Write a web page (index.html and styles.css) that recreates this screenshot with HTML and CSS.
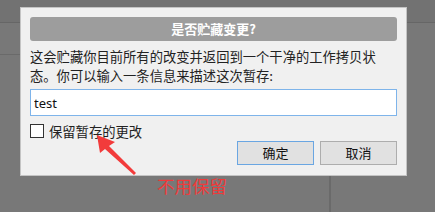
FILE: index.html
```html
<!DOCTYPE html>
<html lang="zh-CN">
<head>
    <meta charset="UTF-8">
    <title>是否贮藏变更?</title>
    <link rel="stylesheet" href="styles.css">
</head>
<body>

    <div class="desktop">
        <div class="bg-band"></div>
        <div class="bg-line-left"></div>
        <div class="bg-divider"></div>

        <div class="dialog">
            <div class="dialog-title">是否贮藏变更?</div>
            <p class="dialog-text">这会贮藏你目前所有的改变并返回到一个干净的工作拷贝状态。你可以输入一条信息来描述这次暂存:</p>
            <input class="dialog-input" type="text" value="test">
            <label class="keep-row">
                <span class="checkbox"></span>
                <span>保留暂存的更改</span>
            </label>
            <div class="buttons">
                <div class="button primary">确定</div>
                <div class="button">取消</div>
            </div>
        </div>

        <svg class="arrow" width="435" height="212" viewBox="0 0 435 212">
            <polygon points="97,135 115,142 109,146 136,173 134,175 105,149 100,153" fill="#f23b3b"/>
        </svg>
        <div class="note">不用保留</div>
    </div>

</body>
</html>
```

FILE: styles.css
```css
body {
    margin: 0;
    background-color: #787878;
    font-family: "Noto Sans CJK SC", "Noto Sans", sans-serif;
}

.desktop {
    position: relative;
    width: 435px;
    height: 212px;
    overflow: hidden;
}

/* windows behind the dialog */
.bg-band {
    position: absolute;
    left: 0;
    top: 0;
    width: 435px;
    height: 22px;
    background-color: #727272;
    border-bottom: 1px solid #666;
}

.bg-line-left {
    position: absolute;
    left: 0;
    top: 54px;
    width: 20px;
    height: 1px;
    background-color: #6a6a6a;
}

.bg-divider {
    position: absolute;
    left: 329px;
    top: 176px;
    width: 2px;
    height: 36px;
    background-color: #6a6a6a;
}

.dialog {
    position: absolute;
    left: 20px;
    top: 7px;
    width: 387px;
    height: 169px;
    box-sizing: border-box;
    padding: 9px;
    background-color: #f0f0f0;
    border: 1px solid #c4c4c4;
    display: flex;
    flex-direction: column;
}

.dialog-title {
    height: 24px;
    line-height: 24px;
    background-color: #9d9d9d;
    border-radius: 3px;
    color: #fff;
    font-size: 13px;
    font-weight: bold;
    text-align: center;
}

.dialog-text {
    margin: 6px 0 0;
    font-size: 13.3px;
    line-height: 19px;
    color: #222;
}

.dialog-input {
    margin-top: 4px;
    height: 27px;
    box-sizing: border-box;
    border: 1px solid #7eb4ea;
    padding: 0 3px;
    background-color: #fff;
    font-family: "Noto Sans", sans-serif;
    font-size: 13px;
    color: #111;
    outline: none;
}

.keep-row {
    display: flex;
    align-items: center;
    margin-top: 7px;
    height: 16px;
    font-size: 13.3px;
    color: #222;
}

.checkbox {
    width: 12px;
    height: 12px;
    border: 1px solid #333;
    background-color: #fff;
    margin-right: 5px;
}

.buttons {
    display: flex;
    justify-content: flex-end;
    gap: 6px;
    margin-top: 2px;
}

.button {
    width: 77px;
    height: 24px;
    box-sizing: border-box;
    line-height: 22px;
    text-align: center;
    font-size: 13px;
    color: #111;
    background-color: #e1e1e1;
    border: 1px solid #adadad;
}

.button.primary {
    border-color: #6aa6e2;
}

.arrow {
    position: absolute;
    left: 0;
    top: 0;
    pointer-events: none;
}

.note {
    position: absolute;
    left: 157px;
    top: 175px;
    font-size: 17.5px;
    line-height: 22px;
    color: #ee3b3b;
}
```
